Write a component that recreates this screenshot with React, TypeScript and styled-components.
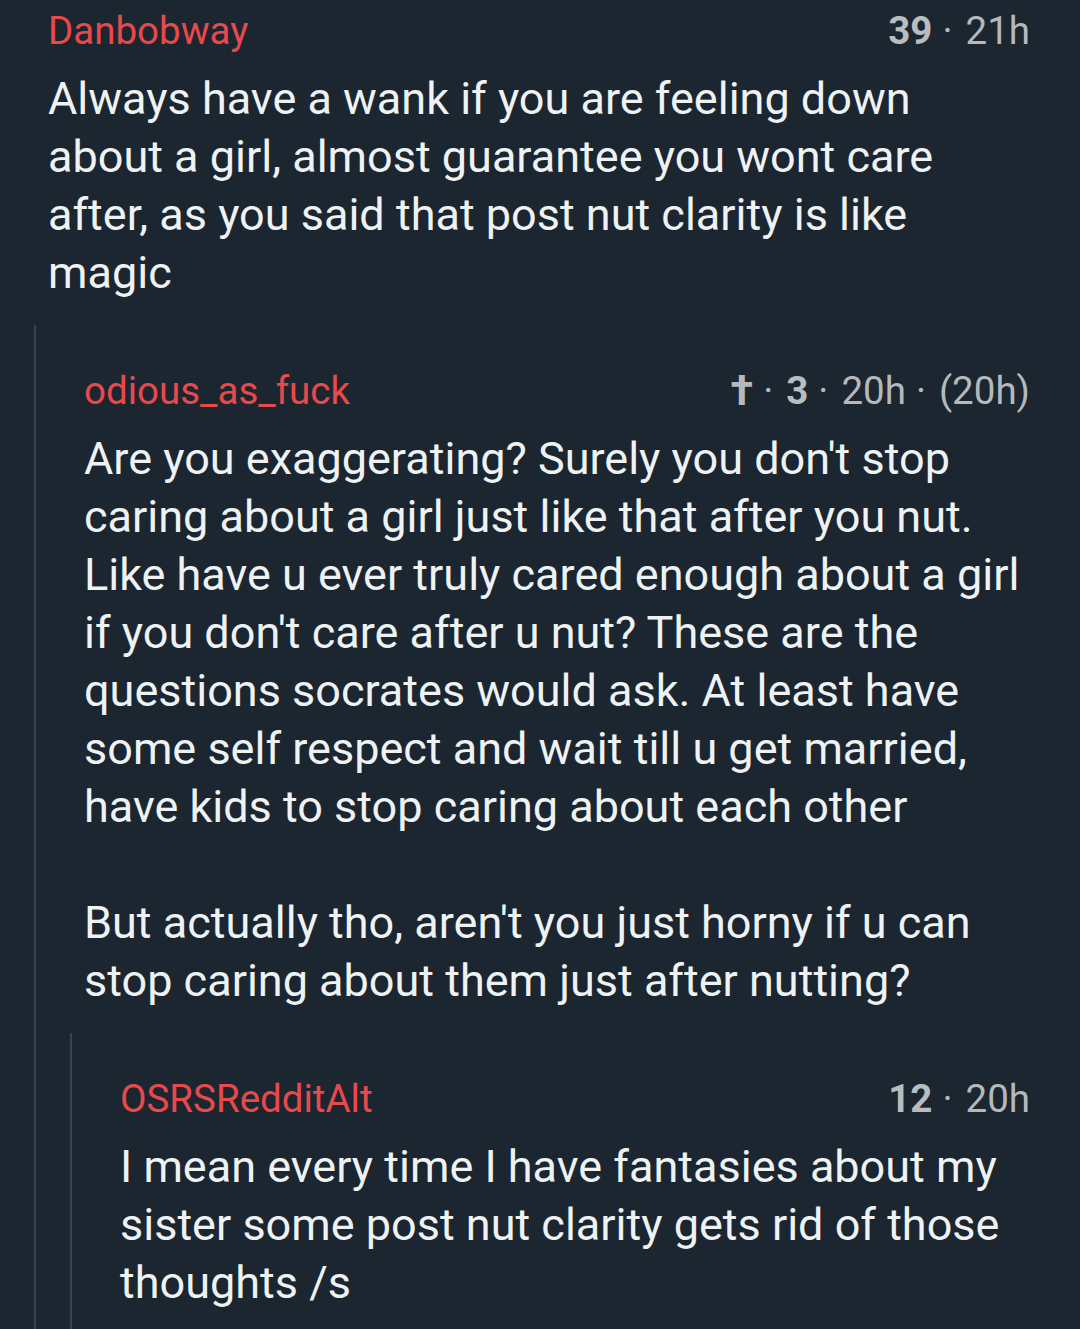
import React from "react";
import styled, { createGlobalStyle } from "styled-components";

const Global = createGlobalStyle`
  html, body { margin: 0; padding: 0; background: #1b2631; }
  body { font-family: Roboto, "Noto Sans", Arial, sans-serif; -webkit-font-smoothing: antialiased; }
`;

const Page = styled.div`
  width: 1080px;
  min-height: 1329px;
  background: #1b2631;
  overflow: hidden;
`;

const CommentBox = styled.div<{ $top?: number }>`
  padding: ${(p) => p.$top ?? 43}px 50px 23px 48px;
`;

const Header = styled.div`
  display: flex;
  align-items: center;
  justify-content: space-between;
  height: 44px;
  margin-bottom: 18px;
`;

const Author = styled.span`
  color: #e8494b;
  font-size: 38.5px;
`;

const Meta = styled.span`
  color: #b5b9bc;
  font-size: 38.5px;
  display: flex;
  align-items: center;
`;

const Score = styled.b`
  font-weight: 700;
  color: #b9bdc0;
`;

const Dot = styled.span`
  margin: 0 13px 0 10px;
`;

const Dagger = styled.span`
  font-weight: 700;
  font-size: 42px;
`;

const Body = styled.div`
  color: #eef2f3;
  font-size: 45px;
  line-height: 58px;
  white-space: pre-line;
`;

const Para = styled.p`
  margin: 0;
  & + & { margin-top: 58px; }
`;

const Children = styled.div`
  margin-left: 34px;
  border-left: 2px solid #36434f;
`;

type MetaItem = { dagger?: boolean; score: string; times: string[] };

function Comment({ author, meta, paras, top }: { author: string; meta: MetaItem; paras: string[]; top?: number }) {
  return (
    <CommentBox $top={top}>
      <Header>
        <Author>{author}</Author>
        <Meta>
          {meta.dagger && (
            <>
              <Dagger>†</Dagger>
              <Dot>·</Dot>
            </>
          )}
          <Score>{meta.score}</Score>
          {meta.times.map((t, i) => (
            <React.Fragment key={i}>
              <Dot>·</Dot>
              <span>{t}</span>
            </React.Fragment>
          ))}
        </Meta>
      </Header>
      <Body>
        {paras.map((p, i) => (
          <Para key={i}>{p}</Para>
        ))}
      </Body>
    </CommentBox>
  );
}

export default function App() {
  return (
    <Page>
      <Global />
      <Comment
        top={8}
        author="Danbobway"
        meta={{ score: "39", times: ["21h"] }}
        paras={[
          "Always have a wank if you are feeling down\nabout a girl, almost guarantee you wont care\nafter, as you said that post nut clarity is like\nmagic",
        ]}
      />
      <Children>
        <Comment
          author="odious_as_fuck"
          meta={{ dagger: true, score: "3", times: ["20h", "(20h)"] }}
          paras={[
            "Are you exaggerating? Surely you don't stop\ncaring about a girl just like that after you nut.\nLike have u ever truly cared enough about a girl\nif you don't care after u nut? These are the\nquestions socrates would ask. At least have\nsome self respect and wait till u get married,\nhave kids to stop caring about each other",
            "But actually tho, aren't you just horny if u can\nstop caring about them just after nutting?",
          ]}
        />
        <Children>
          <Comment
            author="OSRSRedditAlt"
            meta={{ score: "12", times: ["20h"] }}
            paras={[
              "I mean every time I have fantasies about my\nsister some post nut clarity gets rid of those\nthoughts /s",
            ]}
          />
        </Children>
      </Children>
    </Page>
  );
}
